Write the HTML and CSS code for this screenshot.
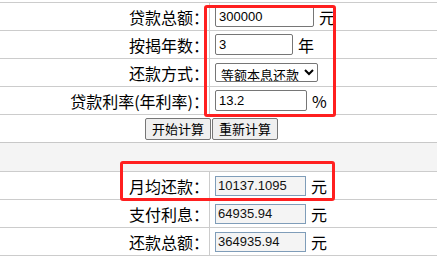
FILE: index.html
```html
<!DOCTYPE html>
<html lang="zh-CN">
<head>
    <meta charset="UTF-8">
    <title>贷款计算器</title>
    <link rel="stylesheet" href="styles.css">
</head>
<body>
<div class="page">
    <!-- 输入区 -->
    <div class="row first">
        <div class="label">贷款总额：</div>
        <div class="field"><input class="txt amount" type="text" value="300000"><span class="unit">元</span></div>
    </div>
    <div class="row">
        <div class="label">按揭年数：</div>
        <div class="field"><input class="txt years" type="text" value="3"><span class="unit">年</span></div>
    </div>
    <div class="row">
        <div class="label">还款方式：</div>
        <div class="field">
            <select class="mode">
                <option>等额本息还款</option>
                <option>等额本金还款</option>
            </select>
        </div>
    </div>
    <div class="row">
        <div class="label">贷款利率(年利率)：</div>
        <div class="field"><input class="txt rate" type="text" value="13.2"><span class="unit">%</span></div>
    </div>
    <div class="row actions">
        <button type="button">开始计算</button><button type="button">重新计算</button>
    </div>
    <div class="row spacer"></div>

    <!-- 结果区 -->
    <div class="row">
        <div class="label">月均还款：</div>
        <div class="field"><input class="out" type="text" value="10137.1095" readonly><span class="unit">元</span></div>
    </div>
    <div class="row">
        <div class="label">支付利息：</div>
        <div class="field"><input class="out" type="text" value="64935.94" readonly><span class="unit">元</span></div>
    </div>
    <div class="row">
        <div class="label">还款总额：</div>
        <div class="field"><input class="out" type="text" value="364935.94" readonly><span class="unit">元</span></div>
    </div>

    <!-- 红框标注 -->
    <div class="mark mark-input"></div>
    <div class="mark mark-result"></div>
</div>
</body>
</html>
```

FILE: styles.css
```css
body {
    margin: 0;
    padding-top: 2px;
    background-color: #fff;
    font-family: "Liberation Sans", "Noto Sans CJK SC", sans-serif;
    color: #000;
}
.page {
    position: relative;
    width: 437px;
}
.row {
    display: flex;
    height: 28px;
    box-sizing: border-box;
    border-bottom: 1px solid #ccc;
}
.row.first {
    height: 29px;
    border-top: 1px solid #ccc;
}
.label {
    width: 210px;
    box-sizing: border-box;
    border-right: 1px solid #ccc;
    display: flex;
    align-items: center;
    justify-content: flex-end;
    font-family: "Noto Sans CJK SC", sans-serif;
    font-size: 16px;
    line-height: 20px;
    white-space: nowrap;
}
.field {
    flex: 1;
    display: flex;
    align-items: center;
    padding-left: 5px;
}
.unit {
    margin-left: 5px;
    font-family: "Noto Sans CJK SC", "Liberation Sans", sans-serif;
    font-size: 16px;
    line-height: 20px;
}
.txt {
    height: 21px;
    box-sizing: border-box;
    padding: 1px 3px;
    border: 1px solid #767676;
    border-radius: 2px;
    background: #fff;
    font-family: "Liberation Sans", "Noto Sans CJK SC", sans-serif;
    font-size: 13px;
    color: #000;
}
.amount {
    width: 99px;
}
.years {
    width: 78px;
}
.rate {
    width: 92px;
}
.mode {
    width: 103px;
    height: 19px;
    box-sizing: border-box;
    padding: 0 1px;
    border: 1px solid #767676;
    border-radius: 2px;
    background: #fff;
    font-family: "Noto Sans CJK SC", sans-serif;
    font-size: 13px;
    color: #000;
}
.out {
    width: 91px;
    height: 20px;
    box-sizing: border-box;
    padding: 1px 2px;
    border: 1px solid #7f9db9;
    background: #f4f4f4;
    font-family: "Liberation Sans", sans-serif;
    font-size: 13px;
    color: #111;
}
.actions {
    height: 28px;
    align-items: center;
    justify-content: center;
    padding-right: 14px;
    border-bottom-color: #c8c8c8;
}
.actions button {
    height: 22px;
    padding: 0 6px;
    border: 1px solid #767676;
    border-radius: 2px;
    background: #efefef;
    font-family: "Noto Sans CJK SC", sans-serif;
    font-size: 13px;
    line-height: 18px;
    color: #000;
}
.actions button + button {
    margin-left: 1px;
}
.spacer {
    height: 29px;
    background: #f4f4f4;
}
.mark {
    position: absolute;
    border: 3px solid #ff1f1f;
    border-radius: 3px;
    box-sizing: border-box;
}
.mark-input {
    left: 204px;
    top: 3px;
    width: 132px;
    height: 112px;
}
.mark-result {
    left: 120px;
    top: 159px;
    width: 215px;
    height: 40px;
}
```
